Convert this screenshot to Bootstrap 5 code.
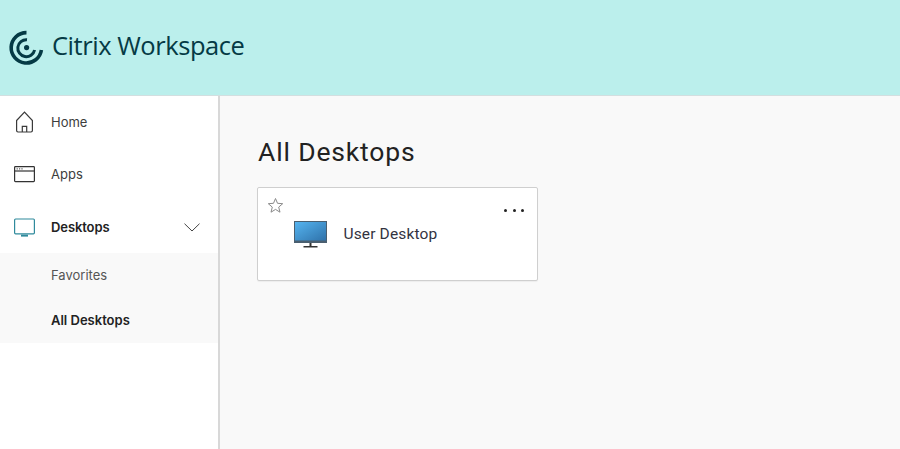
<!DOCTYPE html>
<html lang="en">
<head>
<meta charset="utf-8">
<title>Citrix Workspace</title>
<link href="https://cdn.jsdelivr.net/npm/bootstrap@5.3.0/dist/css/bootstrap.min.css" rel="stylesheet">
<style>
html,body{height:100%;}
body{font-family:"Inter","Liberation Sans",sans-serif;background:#f9f9f9;color:#222;overflow:hidden;}
.topbar{height:96px;background:#bbefec;border-bottom:1px solid #d3dfe0;padding-left:8px;}
.brand-name{font-family:"Open Sans","Liberation Sans",sans-serif;font-size:25.5px;font-weight:500;color:#053a45;letter-spacing:-.45px;line-height:1;margin-left:8px;margin-top:-3px;}
.shell{height:353px;}
.sidenav{width:220px;background:#fff;border-right:2px solid #d8d8d8;flex:none;}
.nav-row{height:52.5px;padding-left:13px;font-size:13px;color:#3d3d3d;}
.nav-row svg.ico{width:23px;height:23px;flex:none;margin-right:15px;}
.nav-row.is-open{font-weight:600;color:#222;letter-spacing:-.1px;}
.chev{margin-left:auto;margin-right:18px;}
.subnav{background:#f9f9f9;height:90px;margin-top:-.5px;}
.sub-row{height:45px;padding-left:51px;font-size:13px;color:#555;}
.sub-row.is-active{font-weight:600;color:#222;}
.content{padding:39px 0 0 37px;}
.page-title{font-family:"Roboto","Liberation Sans",sans-serif;font-size:26.5px;font-weight:400;line-height:34px;letter-spacing:.85px;color:#222;margin:0 0 18px 1px;}
.tile{width:281px;height:94px;background:#fff;border:1px solid #cfcfcf;border-radius:2px;box-shadow:0 1px 1px rgba(0,0,0,.05);}
.star{position:absolute;left:9px;top:9px;}
.dots{position:absolute;right:13px;top:21px;gap:5.500px;}
.dots i{display:block;width:3px;height:3px;border-radius:50%;background:#222;}
.tile-body{padding:33px 0 0 36px;}
.tile-name{font-family:"Roboto","Liberation Sans",sans-serif;font-size:15.5px;color:#33333f;letter-spacing:.15px;margin-left:16.500px;line-height:1;}
</style>
</head>
<body>
<header class="topbar d-flex align-items-center">
  <svg width="36" height="36" viewBox="0 0 36 36" fill="none" stroke="#053a45" stroke-linecap="butt" aria-hidden="true">
    <path d="M18.500 2.600A15.200 15.200 0 1 0 33.400 20" stroke-width="3.600"/>
    <path d="M19 9.700A8.500 8.500 0 1 0 26.600 20" stroke-width="3"/>
    <circle cx="18.600" cy="17.600" r="2.600" fill="#053a45" stroke="none"/>
  </svg>
  <span class="brand-name">Citrix Workspace</span>
</header>
<div class="shell d-flex">
  <nav class="sidenav">
    <div class="nav-row d-flex align-items-center">
      <svg class="ico" viewBox="0 0 23 23" fill="none" stroke="#3a3a3a" stroke-width="1.200" aria-hidden="true"><path d="M3.600 9.500 11.500 1.200l7.900 8.300v10.100c0 .9-.5 1.400-1.400 1.400H5c-.9 0-1.400-.5-1.400-1.400z"/><path d="M9.300 21v-5.600h4.400V21"/></svg>
      <span>Home</span>
    </div>
    <div class="nav-row d-flex align-items-center">
      <svg class="ico" viewBox="0 0 23 23" fill="none" stroke="#333" stroke-width="1.200" aria-hidden="true"><rect x="1.600" y="3.600" width="19.800" height="15" rx=".8"/><path d="M1.600 8h19.800"/><path d="M3.600 5.900h1.200M6 5.900h1.200M8.400 5.900h1.200" stroke-width="1"/></svg>
      <span>Apps</span>
    </div>
    <div class="nav-row is-open d-flex align-items-center">
      <svg class="ico" viewBox="0 0 23 23" fill="none" stroke="#2f8a9c" stroke-width="1.200" aria-hidden="true"><rect x="1.600" y="3" width="19.800" height="14.800" rx="1"/><path d="M8 19.600h7" stroke-width="2"/></svg>
      <span>Desktops</span>
      <svg class="chev" width="16" height="9" viewBox="0 0 16 9" fill="none" stroke="#444" stroke-width="1" aria-hidden="true"><path d="M.5.7 8 8l7.500-7.300"/></svg>
    </div>
    <div class="subnav">
      <div class="sub-row d-flex align-items-center">Favorites</div>
      <div class="sub-row is-active d-flex align-items-center">All Desktops</div>
    </div>
  </nav>
  <main class="content flex-grow-1">
    <h1 class="page-title">All Desktops</h1>
    <div class="tile position-relative">
      <svg class="star" width="17" height="17" viewBox="0 0 17 17" fill="none" stroke="#8a8a8a" stroke-width="1" aria-hidden="true"><path d="M8.500 1.500 10.500 6.300l5.200.4-4 3.400 1.300 5.100-4.500-2.800L4 15.200l1.300-5.100-4-3.400 5.200-.4z"/></svg>
      <div class="dots d-flex"><i></i><i></i><i></i></div>
      <div class="tile-body d-flex align-items-center">
        <svg width="33" height="27" viewBox="0 0 33 27" aria-hidden="true">
          <defs><linearGradient id="scr" x1="0" y1="0" x2="1" y2="1"><stop offset="0" stop-color="#55b4f0"/><stop offset="1" stop-color="#2f72aa"/></linearGradient></defs>
          <rect x="0" y="0" width="33" height="22" fill="#4a5f70"/>
          <rect x="1" y="1" width="31" height="18.500" fill="url(#scr)"/>
          <rect x="15.500" y="22" width="2" height="3" fill="#333"/>
          <rect x="9.500" y="25" width="14" height="1.500" fill="#333"/>
        </svg>
        <span class="tile-name">User Desktop</span>
      </div>
    </div>
  </main>
</div>
</body>
</html>
